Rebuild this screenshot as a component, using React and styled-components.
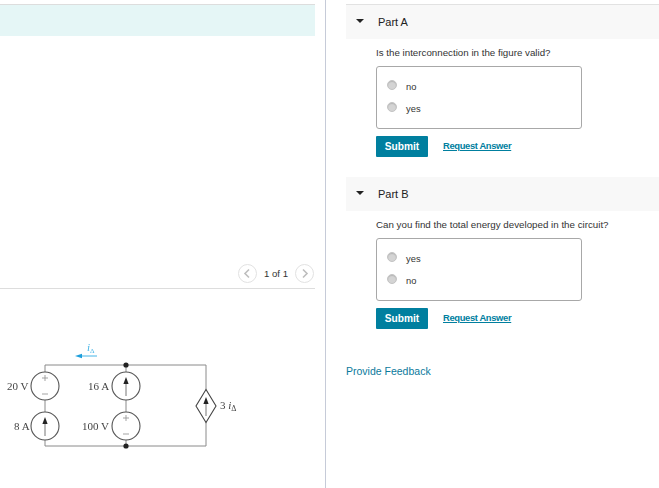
import React from 'react'
import styled, { createGlobalStyle } from 'styled-components'

const Global = createGlobalStyle`
  html, body { margin: 0; padding: 0; background: #fff; }
  body { font-family: "Liberation Sans", Arial, sans-serif; color: #222; }
`

const Page = styled.div`
  display: flex;
  width: 659px;
  height: 488px;
  overflow: hidden;
`
const LeftPane = styled.div`
  width: 326px;
  height: 100%;
  box-sizing: border-box;
  border-right: 1px solid #c6cbd8;
  padding-top: 4px;
`
const Banner = styled.div`
  width: 315px;
  height: 32px;
  box-sizing: border-box;
  border-top: 1px solid #dddddd;
  background: #e5f6f6;
`
const Pager = styled.div`
  width: 315px;
  height: 24px;
  margin-top: 229px;
  box-sizing: border-box;
  border-bottom: 1px solid #dddddd;
  padding: 0 1px 6px 0;
  display: flex;
  align-items: center;
  justify-content: flex-end;
  gap: 7px;
  font-size: 9.6px;
  color: #333;
`
const PagerButton = styled.span`
  width: 19px;
  height: 19px;
  box-sizing: border-box;
  border: 1px solid #e2e2e2;
  border-radius: 50%;
  display: flex;
  align-items: center;
  justify-content: center;
  svg { display: block; }
`
const Figure = styled.svg`
  display: block;
  margin-top: 51px;
  filter: blur(0.35px);
  text { font-family: "Liberation Serif", serif; fill: #444; }
`
const RightPane = styled.div`
  flex: 1;
  padding: 4px 0 0 20px;
`
const PartHeader = styled.div`
  height: ${p => p.$first ? 35 : 34}px;
  box-sizing: border-box;
  border-top: ${p => p.$first ? '1px solid #e2e2e2' : 'none'};
  background: #f8f8f8;
  display: flex;
  align-items: center;
  padding-left: 10px;
  font-size: 11px;
  color: #222;
`
const Caret = styled.span`
  width: 0;
  height: 0;
  border-left: 4px solid transparent;
  border-right: 4px solid transparent;
  border-top: 4px solid #222;
  margin: -2px 14px 0 0;
`
const PartBody = styled.div`
  padding: 8px 0 0 30px;
  height: 138px;
  box-sizing: border-box;
`
const Question = styled.div`
  font-size: 9.75px;
  line-height: 12px;
  color: #333;
`
const OptionBox = styled.div`
  width: 206px;
  height: 63px;
  box-sizing: border-box;
  margin-top: 7px;
  border: 1px solid #a8a8a8;
  border-radius: 3px;
  padding: 14px 0 0 11px;
  display: flex;
  flex-direction: column;
  gap: 14px;
`
const Option = styled.label`
  display: flex;
  align-items: center;
  height: 8px;
  font-size: 9.4px;
  color: #333;
  span + span { padding-top: 2px; }
`
const Radio = styled.span`
  width: 8px;
  height: 8px;
  border-radius: 50%;
  background: #d4d4d4;
  border: 1px solid #c4c4c4;
  box-shadow: inset 0 1px 1px #b4b4b4;
  margin: 0 9px 0 -1px;
`
const Actions = styled.div`
  display: flex;
  align-items: center;
  gap: 15px;
  margin-top: 7px;
`
const Submit = styled.button`
  width: 52px;
  height: 21px;
  padding: 0;
  border: none;
  border-radius: 1px;
  background: #007f9f;
  color: #fff;
  font-family: inherit;
  font-size: 10.2px;
  font-weight: bold;
`
const RequestLink = styled.a`
  font-size: 9.4px;
  font-weight: bold;
  letter-spacing: -0.35px;
  margin-top: -2px;
  color: #007f9f;
  text-decoration: underline;
`
const Feedback = styled.a`
  display: block;
  margin-top: 16px;
  font-size: 10.5px;
  color: #0b7a9c;
`

function Source({ x, y, kind }) {
  return (
    <g>
      <circle cx={x} cy={y} r="14" fill="#fff" stroke="#555" strokeWidth="1.1" />
      {kind === 'current' ? (
        <g>
          <line x1={x} y1={y + 10} x2={x} y2={y - 3} stroke="#777" strokeWidth="1" />
          <path d={`M${x} ${y - 9} L${x + 2.6} ${y - 2} L${x - 2.6} ${y - 2} Z`} fill="#222" />
        </g>
      ) : (
        <g stroke="#999" strokeWidth="0.9">
          <path d={`M${x - 3} ${y - 8} H${x + 3} M${x} ${y - 11} V${y - 5}`} />
          <path d={`M${x - 3} ${y + 8} H${x + 3}`} />
        </g>
      )}
    </g>
  )
}

function Circuit() {
  return (
    <Figure width="260" height="120" viewBox="0 340 260 120">
      <path d="M45 365 H206 V446 H45 Z" fill="none" stroke="#8a8a8a" strokeWidth="1" />
      <line x1="126" y1="365" x2="126" y2="446" stroke="#8a8a8a" strokeWidth="1" />
      <circle cx="126" cy="365" r="2.6" fill="#222" />
      <circle cx="126" cy="446" r="2.6" fill="#222" />
      <Source x={45} y={386} kind="voltage" />
      <Source x={45} y={426} kind="current" />
      <Source x={126} y={386} kind="current" />
      <Source x={126} y={426} kind="voltage" />
      <path d="M206 389.5 L216 406 L206 422.5 L196 406 Z" fill="#fff" stroke="#444" strokeWidth="1.1" />
      <line x1="206" y1="416" x2="206" y2="403" stroke="#777" strokeWidth="1" />
      <path d="M206 397 L208.6 404 L203.4 404 Z" fill="#222" />
      <text x="7" y="390" fontSize="11">20 V</text>
      <text x="14" y="430" fontSize="11">8 A</text>
      <text x="88" y="390" fontSize="11">16 A</text>
      <text x="82" y="430" fontSize="11">100 V</text>
      <text x="220" y="409" fontSize="11">3 <tspan fontStyle="italic">i</tspan><tspan fontSize="8" dy="2">Δ</tspan></text>
      <line x1="79" y1="356" x2="97" y2="356" stroke="#45b4e6" strokeWidth="1" />
      <path d="M75 356 L82 353.8 L82 358.2 Z" fill="#1e9fdc" />
      <text x="87" y="351" fontSize="11" fontStyle="italic" style={{ fill: '#45b4e6' }}>i<tspan fontSize="7" dy="2" fontStyle="normal">Δ</tspan></text>
    </Figure>
  )
}

function Chevron({ flip }) {
  return (
    <svg width="8" height="11" viewBox="0 0 8 11">
      <path d={flip ? 'M2 1.5 L6 5.5 L2 9.5' : 'M6 1.5 L2 5.5 L6 9.5'} fill="none" stroke="#bdbdbd" strokeWidth="1.6" />
    </svg>
  )
}

function Part({ title, question, options, first }) {
  return (
    <section>
      <PartHeader $first={first}><Caret />{title}</PartHeader>
      <PartBody>
        <Question>{question}</Question>
        <OptionBox>
          {options.map(o => (
            <Option key={o}><Radio /><span>{o}</span></Option>
          ))}
        </OptionBox>
        <Actions>
          <Submit>Submit</Submit>
          <RequestLink href="#">Request Answer</RequestLink>
        </Actions>
      </PartBody>
    </section>
  )
}

export default function App() {
  return (
    <Page>
      <Global />
      <LeftPane>
        <Banner />
        <Pager>
          <PagerButton><Chevron /></PagerButton>
          <span>1 of 1</span>
          <PagerButton><Chevron flip /></PagerButton>
        </Pager>
        <Circuit />
      </LeftPane>
      <RightPane>
        <Part first title="Part A" question="Is the interconnection in the figure valid?" options={['no', 'yes']} />
        <Part title="Part B" question="Can you find the total energy developed in the circuit?" options={['yes', 'no']} />
        <Feedback>Provide Feedback</Feedback>
      </RightPane>
    </Page>
  )
}
